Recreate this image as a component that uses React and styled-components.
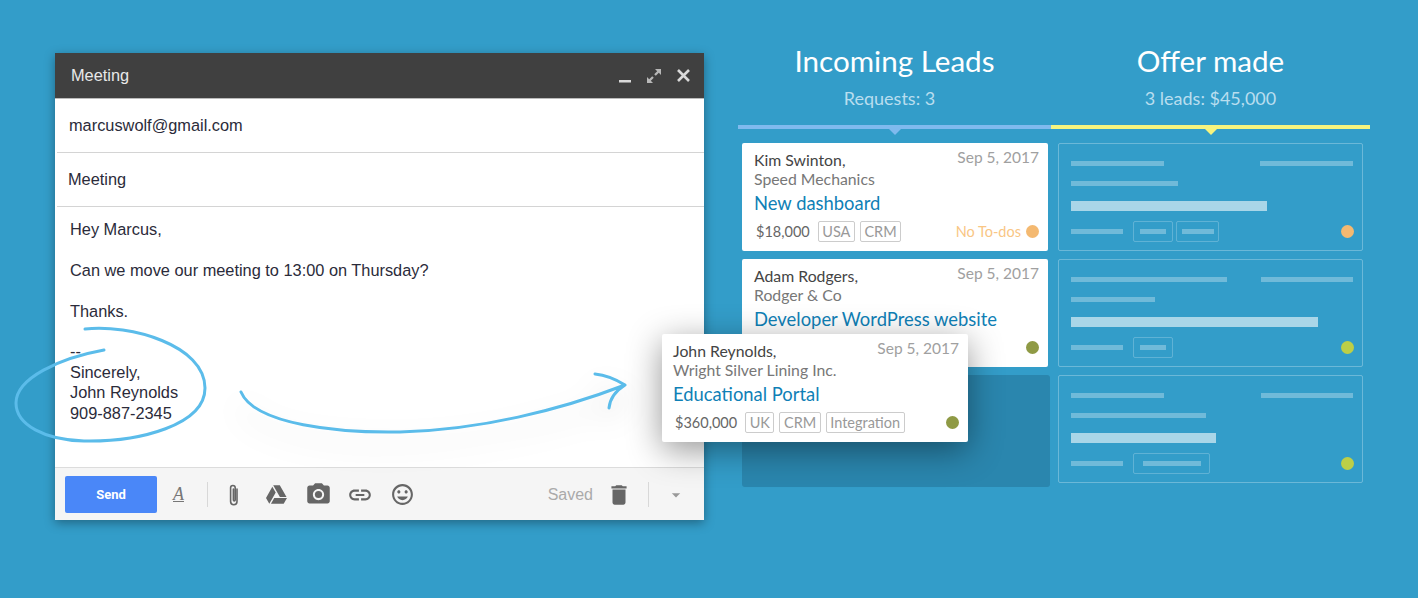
import React from 'react';
import styled, { createGlobalStyle } from 'styled-components';
import { FaGoogleDrive } from 'react-icons/fa';
import { MdPhotoCamera, MdLink, MdOutlineInsertEmoticon, MdDelete, MdArrowDropDown } from 'react-icons/md';

const GlobalStyle = createGlobalStyle`
  html, body {
    margin: 0;
    background: #339dc9;
  }
`;

const Stage = styled.div`
  position: relative;
  display: flex;
  align-items: flex-start;
  width: 1418px;
  height: 598px;
  padding-left: 55px;
  box-sizing: border-box;
  overflow: hidden;
  background: #339dc9;
`;

const Compose = styled.div`
  display: flex;
  flex-direction: column;
  width: 649px;
  height: 467px;
  margin-top: 53px;
  background: #fff;
  box-shadow: 0 3px 10px rgba(0, 0, 0, 0.35);
  font-family: 'Liberation Sans', Arial, sans-serif;
  font-size: 16.35px;
  color: #2b2b3a;
`;

const ComposeHeader = styled.div`
  display: flex;
  align-items: center;
  justify-content: space-between;
  height: 45px;
  padding: 0 13px 0 16px;
  background: #404040;
  color: #e8e8e8;
  border-bottom: 1px solid #bbb;
`;

const WindowControls = styled.div`
  display: flex;
  align-items: center;
  gap: 14px;
  color: #d9d9d9;
`;

const ExpandIcon = styled.svg`
  color: #b8b8b8;
`;

const ComposeField = styled.div`
  display: flex;
  align-items: center;
  height: 53px;
  margin-left: 2px;
  padding-left: ${(p) => p.$inset}px;
  border-bottom: 1px solid #d4d4d4;
`;

const ComposeBody = styled.div`
  flex: 1;
  padding: 12px 15px 0;
  line-height: 20.4px;
`;

const BodyBlock = styled.p`
  margin: 0 0 20.4px;
`;

const Toolbar = styled.div`
  display: flex;
  align-items: center;
  height: 53px;
  flex: none;
  box-sizing: border-box;
  padding: 1px 18px 0 10px;
  background: #f5f5f5;
  border-top: 1px solid #dcdcdc;
  color: #666;
`;

const SendButton = styled.button`
  width: 92px;
  height: 37px;
  border: none;
  border-radius: 2px;
  background: #4a87f8;
  color: #fff;
  font-family: Roboto, 'Liberation Sans', sans-serif;
  font-weight: 700;
  font-size: 13px;
`;

const FormatGlyph = styled.span`
  width: 46px;
  padding-right: 3px;
  box-sizing: border-box;
  text-align: center;
  font-family: 'Liberation Serif', serif;
  font-style: italic;
  font-size: 18px;
  color: #777;
  text-decoration: underline;
`;

const ToolDivider = styled.span`
  width: 1px;
  height: 25px;
  margin: ${(p) => p.$margin};
  background: #d8d8d8;
`;

const IconSlot = styled.span`
  display: flex;
  justify-content: center;
  width: 42px;
`;

const TrashSlot = styled(IconSlot)`
  width: 36px;
  margin-left: 8px;
`;

const SavedLabel = styled.span`
  margin-left: auto;
  font-size: 16px;
  color: #aaa;
`;

const Board = styled.div`
  display: flex;
  margin: 43px 0 0 34px;
`;

const Column = styled.div`
  display: flex;
  flex-direction: column;
  width: ${(p) => p.$width}px;
  font-family: Lato, 'Noto Sans', sans-serif;
`;

const ColumnHead = styled.div`
  position: relative;
  height: 82px;
  border-bottom: 4px solid ${(p) => p.$accent};
  text-align: center;
  color: #fff;

  &::after {
    content: '';
    position: absolute;
    left: 50%;
    bottom: -10px;
    margin-left: -7px;
    border: 7px solid transparent;
    border-bottom: none;
    border-top-color: ${(p) => p.$accent};
  }
`;

const ColumnTitle = styled.div`
  font-size: 29.6px;
  line-height: 36px;
`;

const ColumnSub = styled.div`
  margin-top: 8px;
  padding-right: ${(p) => p.$nudge}px;
  font-size: 18px;
  line-height: 22px;
  color: #b9deef;
`;

const CardStack = styled.div`
  display: flex;
  flex-direction: column;
  gap: 8px;
  padding: 14px 0 0 ${(p) => p.$inset}px;
`;

const LeadCard = styled.div`
  display: flex;
  flex-direction: column;
  width: 306px;
  height: 108px;
  padding: 7px 9px 0 12px;
  box-sizing: border-box;
  background: #fff;
  border-radius: 2px;
  font-family: Lato, 'Noto Sans', sans-serif;
  color: #555;
`;

const FloatingCard = styled(LeadCard)`
  position: absolute;
  left: 662px;
  top: 334px;
  padding-left: 11px;
  box-shadow: 0 8px 34px rgba(0, 0, 0, 0.42);
`;

const CardTop = styled.div`
  display: flex;
  justify-content: space-between;
  font-size: 15.8px;
  line-height: 19px;
  color: #444;
`;

const CardDate = styled.span`
  font-size: 15.5px;
  color: #a0a0a0;
  margin-top: -2px;
`;

const Company = styled.div`
  font-size: 15.8px;
  line-height: 19px;
  color: #777;
`;

const CardTitle = styled.div`
  margin-top: 3px;
  font-size: 18.4px;
  line-height: 24px;
  color: #0f80b6;
`;

const CardFoot = styled.div`
  display: flex;
  align-items: center;
  gap: 5px;
  margin-top: 5px;
  height: 23px;
  font-size: 14.5px;
`;

const Price = styled.span`
  margin: 0 3px 0 2px;
  color: #666;
`;

const Tag = styled.span`
  padding: 0 3.5px;
  line-height: 19px;
  border: 1px solid #ccc;
  border-radius: 2px;
  color: #999;
`;

const Status = styled.span`
  margin-left: auto;
  display: flex;
  align-items: center;
  gap: 5px;
  color: #f9c684;
`;

const Dot = styled.span`
  flex: none;
  width: 13px;
  height: 13px;
  margin-left: ${(p) => (p.$push ? 'auto' : '0')};
  border-radius: 50%;
  background: ${(p) => p.$color};
`;

const PlaceholderSlot = styled.div`
  width: 308px;
  height: 112px;
  background: #2a86ae;
  border-radius: 3px;
`;

const GhostCard = styled.div`
  display: flex;
  flex-direction: column;
  width: 305px;
  height: 108px;
  padding: 17px 9px 0 12px;
  box-sizing: border-box;
  border: 1px solid rgba(255, 255, 255, 0.28);
  border-radius: 2px;
`;

const GhostRow = styled.div`
  display: flex;
  justify-content: space-between;
  margin-bottom: 15px;
`;

const GhostBar = styled.span`
  display: block;
  width: ${(p) => p.$w}px;
  height: ${(p) => (p.$strong ? 10 : 5)}px;
  background: rgba(255, 255, 255, ${(p) => (p.$strong ? 0.58 : 0.3)});
`;

const GhostFoot = styled.div`
  display: flex;
  align-items: center;
  height: 21px;
  margin-top: -5px;
  gap: 3px;
`;

const GhostGap = styled.span`
  width: 4px;
`;

const GhostTag = styled.span`
  display: flex;
  align-items: center;
  justify-content: center;
  width: ${(p) => p.$w}px;
  height: 21px;
  box-sizing: border-box;
  border: 1px solid rgba(255, 255, 255, 0.22);
  border-radius: 2px;
`;

const GhostDot = styled(Dot)`
  margin-right: -1px;
`;

const Sketch = styled.svg`
  position: absolute;
  left: 0;
  top: 0;
  pointer-events: none;
`;

const ArrowPath = styled.path`
  filter: drop-shadow(0 14px 14px rgba(0, 0, 0, 0.14));
`;

const ghosts = [
  { top: [93, 93], mid: 107, wide: 196, tags: [[40, 26], [43, 32]], dot: '#f4b971' },
  { top: [156, 92], mid: 84, wide: 247, tags: [[40, 26]], dot: '#bdcf47' },
  { top: [93, 92], mid: 135, wide: 145, tags: [[77, 58]], dot: '#bdcf47' },
];

function Minimize() {
  return (
    <svg width="14" height="16" viewBox="0 0 14 16">
      <rect x="1" y="12" width="12" height="2.5" fill="currentColor" />
    </svg>
  );
}

function Expand() {
  return (
    <ExpandIcon width="16" height="16" viewBox="0 0 16 16" fill="currentColor">
      <path d="M9 1h6v6l-2.2-2.2-3 3-1.6-1.6 3-3zM7 15H1V9l2.2 2.2 3-3 1.6 1.6-3 3z" />
    </ExpandIcon>
  );
}

function CloseIcon() {
  return (
    <svg width="15" height="15" viewBox="0 0 15 15" stroke="currentColor" strokeWidth="2.6">
      <path d="M2 2l11 11M13 2L2 13" />
    </svg>
  );
}

function PaperClip() {
  return (
    <svg width="16" height="24" viewBox="0 0 16 24" fill="none" stroke="currentColor" strokeWidth="1.6" strokeLinecap="round">
      <path d="M11 6v12.5a3.2 3.2 0 0 1-6.4 0V4.8a2.3 2.3 0 0 1 4.6 0V17a.9.9 0 0 1-1.8 0V6" />
    </svg>
  );
}

export default function App() {
  return (
    <Stage>
      <GlobalStyle />
      <Compose>
        <ComposeHeader>
          <span>Meeting</span>
          <WindowControls>
            <Minimize />
            <Expand />
            <CloseIcon />
          </WindowControls>
        </ComposeHeader>
        <ComposeField $inset={12}>marcuswolf@gmail.com</ComposeField>
        <ComposeField $inset={11}>Meeting</ComposeField>
        <ComposeBody>
          <BodyBlock>Hey Marcus,</BodyBlock>
          <BodyBlock>Can we move our meeting to 13:00 on Thursday?</BodyBlock>
          <BodyBlock>Thanks.</BodyBlock>
          <BodyBlock>
            --
            <br />
            Sincerely,
            <br />
            John Reynolds
            <br />
            909-887-2345
          </BodyBlock>
        </ComposeBody>
        <Toolbar>
          <SendButton>Send</SendButton>
          <FormatGlyph>A</FormatGlyph>
          <ToolDivider $margin="0 5px 0 4px" />
          <IconSlot><PaperClip /></IconSlot>
          <IconSlot><FaGoogleDrive size={21} /></IconSlot>
          <IconSlot><MdPhotoCamera size={27} /></IconSlot>
          <IconSlot><MdLink size={26} /></IconSlot>
          <IconSlot><MdOutlineInsertEmoticon size={25} /></IconSlot>
          <SavedLabel>Saved</SavedLabel>
          <TrashSlot><MdDelete size={26} /></TrashSlot>
          <ToolDivider $margin="0 17px 0 11px" />
          <MdArrowDropDown size={20} color="#999" />
        </Toolbar>
      </Compose>

      <Board>
        <Column $width={313}>
          <ColumnHead $accent="#7fbaee">
            <ColumnTitle>Incoming Leads</ColumnTitle>
            <ColumnSub $nudge={10}>Requests: 3</ColumnSub>
          </ColumnHead>
          <CardStack $inset={4}>
            <LeadCard>
              <CardTop>
                <span>Kim Swinton,</span>
                <CardDate>Sep 5, 2017</CardDate>
              </CardTop>
              <Company>Speed Mechanics</Company>
              <CardTitle>New dashboard</CardTitle>
              <CardFoot>
                <Price>$18,000</Price>
                <Tag>USA</Tag>
                <Tag>CRM</Tag>
                <Status>
                  No To-dos
                  <Dot $color="#f4b971" />
                </Status>
              </CardFoot>
            </LeadCard>
            <LeadCard>
              <CardTop>
                <span>Adam Rodgers,</span>
                <CardDate>Sep 5, 2017</CardDate>
              </CardTop>
              <Company>Rodger &amp; Co</Company>
              <CardTitle>Developer WordPress website</CardTitle>
              <CardFoot>
                <Dot $push $color="#8f9a45" />
              </CardFoot>
            </LeadCard>
            <PlaceholderSlot />
          </CardStack>
        </Column>
        <Column $width={319}>
          <ColumnHead $accent="#f6f47f">
            <ColumnTitle>Offer made</ColumnTitle>
            <ColumnSub $nudge={0}>3 leads: $45,000</ColumnSub>
          </ColumnHead>
          <CardStack $inset={7}>
            {ghosts.map((ghost, i) => (
              <GhostCard key={i}>
                <GhostRow>
                  <GhostBar $w={ghost.top[0]} />
                  <GhostBar $w={ghost.top[1]} />
                </GhostRow>
                <GhostRow>
                  <GhostBar $w={ghost.mid} />
                </GhostRow>
                <GhostRow>
                  <GhostBar $strong $w={ghost.wide} />
                </GhostRow>
                <GhostFoot>
                  <GhostBar $w={52} />
                  <GhostGap />
                  {ghost.tags.map(([w, inner], j) => (
                    <GhostTag key={j} $w={w}>
                      <GhostBar $w={inner} />
                    </GhostTag>
                  ))}
                  <GhostDot $push $color={ghost.dot} />
                </GhostFoot>
              </GhostCard>
            ))}
          </CardStack>
        </Column>
      </Board>

      <Sketch width="1418" height="598" viewBox="0 0 1418 598" fill="none" stroke="#5bbcea" strokeWidth="3" strokeLinecap="round" strokeLinejoin="round">
        <path d="M85 329C130 324 205 345 205 388C205 425 140 442 84 441C45 440 16 425 16 403C16 378 60 358 104 350" />
        <ArrowPath d="M241 392C255 425 340 433 400 432C480 430 560 410 625 385M595 374C605 375 617 380 625 385C617 390 610 398 609 408" />
      </Sketch>

      <FloatingCard>
        <CardTop>
          <span>John Reynolds,</span>
          <CardDate>Sep 5, 2017</CardDate>
        </CardTop>
        <Company>Wright Silver Lining Inc.</Company>
        <CardTitle>Educational Portal</CardTitle>
        <CardFoot>
          <Price>$360,000</Price>
          <Tag>UK</Tag>
          <Tag>CRM</Tag>
          <Tag>Integration</Tag>
          <Dot $push $color="#8f9a45" />
        </CardFoot>
      </FloatingCard>
    </Stage>
  );
}
